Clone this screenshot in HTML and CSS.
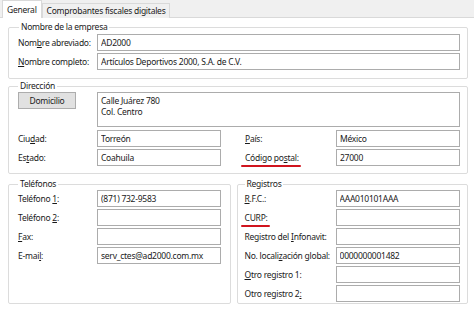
FILE: index.html
```html
<!DOCTYPE html>
<html lang="es">
<head>
<meta charset="utf-8">
<title>Empresa</title>
<link rel="stylesheet" href="styles.css">
</head>
<body>
<div class="window">
  <div class="tabs">
    <div class="tab active">General</div>
    <div class="tab">Comprobantes fiscales digitales</div>
  </div>
  <div class="panel">
    <fieldset class="group g-empresa">
      <legend>Nombre de la empresa</legend>
      <div class="rows one">
        <label>Nom<u>b</u>re abreviado:</label><input class="field" value="AD2000">
        <label><u>N</u>ombre completo:</label><input class="field" value="Artículos Deportivos 2000, S.A. de C.V.">
      </div>
    </fieldset>

    <fieldset class="group g-direccion">
      <legend>Dirección</legend>
      <div class="addr">
        <button class="btn">Domicilio</button>
        <textarea class="field area">Calle Juárez 780
Col. Centro</textarea>
      </div>
      <div class="rows two">
        <label>Ciu<u>d</u>ad:</label><input class="field" value="Torreón">
        <span></span>
        <label><u>P</u>aís:</label><input class="field" value="México">
        <label>Es<u>t</u>ado:</label><input class="field" value="Coahuila">
        <span></span>
        <label><span class="mark">Código po<u>s</u>tal:</span></label><input class="field" value="27000">
      </div>
    </fieldset>

    <div class="bottom">
      <fieldset class="group g-tel">
        <legend>Teléfonos</legend>
        <div class="rows tel">
          <label>Teléfono <u>1</u>:</label><input class="field" value="(871) 732-9583">
          <label>Teléfono <u>2</u>:</label><input class="field" value="">
          <label><u>F</u>ax:</label><input class="field" value="">
          <label>E-mai<u>l</u>:</label><input class="field" value="serv_ctes@ad2000.com.mx">
        </div>
      </fieldset>
      <fieldset class="group g-reg">
        <legend>Registros</legend>
        <div class="rows reg">
          <label><u>R</u>.F.C.:</label><input class="field" value="AAA010101AAA">
          <label><span class="mark">CURP:</span></label><input class="field" value="">
          <label>Registro del <u>I</u>nfonavit:</label><input class="field" value="">
          <label>No. locali<u>z</u>ación global:</label><input class="field" value="0000000001482">
          <label><u>O</u>tro registro 1:</label><input class="field" value="">
          <label>Otro registro 2<u>:</u></label><input class="field" value="">
        </div>
      </fieldset>
    </div>
  </div>
</div>
</body>
</html>
```

FILE: styles.css
```css
* { box-sizing: border-box; }
html, body { margin: 0; padding: 0; }
body {
  background: #ffffff;
  font-family: "Noto Sans", "Open Sans", sans-serif;
  font-size: 8.5px;
  letter-spacing: -0.25px;
  color: #1a1a1a;
  width: 474px;
  height: 313px;
  overflow: hidden;
}
.window { width: 474px; }
.tabs {
  display: flex;
  align-items: flex-end;
  height: 18px;
  background: #f0f0f0;
  padding-left: 2px;
  border-bottom: 1px solid #d9d9d9;
}
.tab {
  height: 15px;
  line-height: 13px;
  padding: 0 4px;
  border: 1px solid #d9d9d9;
  border-bottom: none;
  background: #f0f0f0;
  margin-bottom: -1px;
}
.tab.active {
  height: 18px;
  line-height: 17px;
  background: #ffffff;
  padding: 0 4px;
  margin-bottom: -1px;
  position: relative;
  z-index: 1;
}
.panel {
  padding: 3px 6px 0 8px;
}
.group {
  margin: 0;
  border: 1px solid #dcdcdc;
  border-radius: 2px;
  min-width: 0;
  padding: 1px 8px 8px 9px;
}
.group legend {
  padding: 0 2px;
  margin-left: 0;
  line-height: 12px;
}
.g-empresa legend { margin-left: 1px; }
.g-empresa { padding-top: 1px; padding-bottom: 8px; }
.rows {
  display: grid;
  row-gap: 2px;
  align-items: center;
}
.rows label { white-space: nowrap; line-height: 16px; }
.rows.one { grid-template-columns: 79px 363px; }
.field {
  font: inherit;
  letter-spacing: inherit;
  color: inherit;
  height: 17px;
  margin: 0;
  border: 1px solid #acacac;
  border-radius: 0;
  padding: 0 3px;
  background: #fff;
  width: 100%;
  outline: none;
}
.g-direccion { margin-top: 1px; padding-top: 0; padding-bottom: 7px; }
.addr {
  display: grid;
  grid-template-columns: 79px 363px;
  margin-bottom: 3px;
}
.btn {
  font: inherit;
  letter-spacing: inherit;
  color: inherit;
  width: 58px;
  height: 17px;
  margin: 0;
  padding: 0;
  background: #e1e1e1;
  border: 1px solid #adadad;
  border-radius: 0;
}
.area {
  height: 35px;
  resize: none;
  overflow: hidden;
  line-height: 11px;
  padding: 2px 3px;
}
.rows.two { grid-template-columns: 79px 124px 24px 91px 124px; }
.mark { position: relative; }
.mark::after {
  content: "";
  position: absolute;
  left: -4px;
  right: -2px;
  bottom: -4px;
  height: 2px;
  background: #d0141e;
  border-radius: 1px;
}
.bottom {
  display: flex;
  gap: 6px;
  margin-top: 4px;
}
.g-tel { width: 223px; height: 126px; padding: 0 9px 0 9px; }
.g-reg { width: 232px; height: 126px; padding: 0 8px 0 7px; }
.rows.tel { grid-template-columns: 79px 124px; }
.rows.reg { grid-template-columns: 91px 124px; }
u { text-decoration-thickness: 1px; text-underline-offset: 1px; }
```
